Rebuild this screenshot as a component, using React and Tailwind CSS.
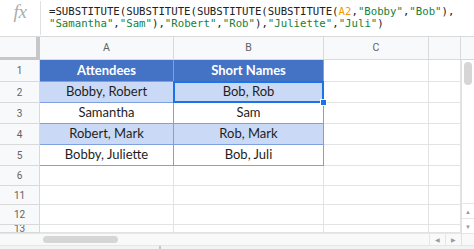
export default function App() {
  const rows = [
    { n: '1', h: 'h-[22px]', a: 'Attendees', b: 'Short Names', kind: 'head' },
    { n: '2', h: 'h-[21px]', a: 'Bobby, Robert', b: 'Bob, Rob', kind: 'band', sel: true },
    { n: '3', h: 'h-[21px]', a: 'Samantha', b: 'Sam', kind: 'plain' },
    { n: '4', h: 'h-[21px]', a: 'Robert, Mark', b: 'Rob, Mark', kind: 'band' },
    { n: '5', h: 'h-[21px]', a: 'Bobby, Juliette', b: 'Bob, Juli', kind: 'plain' },
    { n: '6', h: 'h-[20px]' },
    { n: '11', h: 'h-[19px]' },
    { n: '12', h: 'h-[20px]' },
    { n: '13', h: 'h-[8px]' },
  ]

  const cellBg = (kind) =>
    kind === 'head'
      ? 'bg-[#4472c4] text-white font-bold'
      : kind === 'band'
        ? 'bg-[#cad9f5] text-[#1e1e1e]'
        : kind === 'plain'
          ? 'bg-white text-[#1e1e1e]'
          : 'bg-white'

  const tableBorder = (kind) =>
    kind ? 'border-r border-b border-[#7ea0de]' : 'border-r border-b border-[#e2e3e3]'

  const str = 'text-[#188038]'

  return (
    <div className="relative w-[474px] h-[249px] overflow-hidden bg-white font-['Roboto',sans-serif]">
      {/* formula bar */}
      <div className="h-[37px] flex border-b border-[#d9d9d9]">
        <div className="w-[41px] flex items-start justify-center pt-[1px] border-r border-[#e0e0e0] my-[1px]">
          <span className="font-['Liberation_Serif',serif] italic text-[19px] leading-[20px] text-[#adadad] tracking-tight">
            fx
          </span>
        </div>
        <div className="pl-[8px] pt-[6px] font-['DejaVu_Sans_Mono',monospace] text-[10.7px] leading-[11.5px] text-[#202124] whitespace-pre">
          <div>
            =SUBSTITUTE(SUBSTITUTE(SUBSTITUTE(SUBSTITUTE(<span className="text-[#f29900]">A2</span>,
            <span className={str}>"Bobby"</span>,<span className={str}>"Bob"</span>),
          </div>
          <div>
            <span className={str}>"Samantha"</span>,<span className={str}>"Sam"</span>),
            <span className={str}>"Robert"</span>,<span className={str}>"Rob"</span>),
            <span className={str}>"Juliette"</span>,<span className={str}>"Juli"</span>)
          </div>
        </div>
      </div>

      <div className="flex">
        <div className="w-[461px] flex flex-col">
          {/* column headers */}
          <div className="h-[23px] flex bg-[#f8f9fa] text-[10.5px] text-[#5f6368]">
            <div className="w-[40px] border-r-[4px] border-b-[3px] border-[#c7c7c7] bg-[#f8f9fa]" />
            <div className="w-[134px] flex items-center justify-center border-r border-b border-[#d9d9d9]">A</div>
            <div className="w-[150px] flex items-center justify-center border-r border-b border-[#d9d9d9]">B</div>
            <div className="w-[105px] flex items-center justify-center border-r border-b border-[#d9d9d9]">C</div>
            <div className="w-[32px] border-r border-b border-[#d9d9d9]" />
          </div>

          {rows.map((r) => (
            <div key={r.n} className={`${r.h} flex ${r.kind ? '' : 'overflow-hidden'}`}>
              <div className="w-[40px] shrink-0 flex items-center justify-center bg-[#f8f9fa] border-r border-b border-[#d9d9d9] text-[10px] text-[#5f6368]">
                {r.n}
              </div>
              <div
                className={`w-[134px] shrink-0 flex items-center justify-center text-[13px] font-['Lato',sans-serif] ${cellBg(r.kind)} ${tableBorder(r.kind)}`}
              >
                {r.a}
              </div>
              <div
                className={`relative w-[150px] shrink-0 flex items-center justify-center text-[13px] font-['Lato',sans-serif] ${cellBg(r.kind)} ${tableBorder(r.kind)}`}
              >
                {r.b}
                {r.sel && (
                  <>
                    <div className="absolute left-[-1px] top-[-1px] right-[-1px] bottom-[-1px] border-2 border-[#1a73e8]" />
                    <div className="absolute right-[-4px] bottom-[-4px] w-[7px] h-[7px] bg-[#1a73e8] border border-white z-10" />
                  </>
                )}
              </div>
              <div className="w-[105px] shrink-0 border-r border-b border-[#e2e3e3]" />
              <div className="w-[32px] shrink-0 border-r border-b border-[#e2e3e3]" />
            </div>
          ))}

          {/* horizontal scrollbar */}
          <div className="h-[12px] flex items-center bg-[#f9f9f9] border-t border-[#e6e6e6]">
            <div className="ml-[43px] w-[75px] h-[7px] rounded-full bg-[#d6d6d6]" />
            <div className="ml-auto flex h-full">
              <div className="w-[16px] border-l border-[#e6e6e6] flex items-center justify-center text-[6px] text-[#9a9a9a]">◀</div>
              <div className="w-[16px] border-l border-[#e6e6e6] flex items-center justify-center text-[6px] text-[#9a9a9a]">▶</div>
            </div>
          </div>
        </div>

        {/* vertical scrollbar */}
        <div className="w-[13px] flex flex-col bg-white">
          <div className="h-[23px] bg-[#f8f9fa] border-b border-[#d9d9d9]" />
          <div className="flex-1 flex flex-col border-l border-[#e0e0e0]">
            <div className="mt-[2px] ml-[2px] w-[8px] h-[23px] rounded-full bg-[#d6d6d6]" />
            <div className="mt-auto h-[15px] border-t border-[#e6e6e6] flex items-center justify-center text-[6px] text-[#9a9a9a]">▲</div>
            <div className="h-[15px] border-t border-[#e6e6e6] flex items-center justify-center text-[6px] text-[#9a9a9a]">▼</div>
            <div className="h-[12px] border-t border-[#e6e6e6] bg-[#f9f9f9]" />
          </div>
        </div>
      </div>

      {/* bottom strip */}
      <div className="h-[4px] bg-[#f1f3f4] border-t border-[#e6e6e6] flex">
        <div className="ml-[159px] w-[2px] h-[3px] bg-[#c8c8c8]" />
      </div>
    </div>
  )
}
